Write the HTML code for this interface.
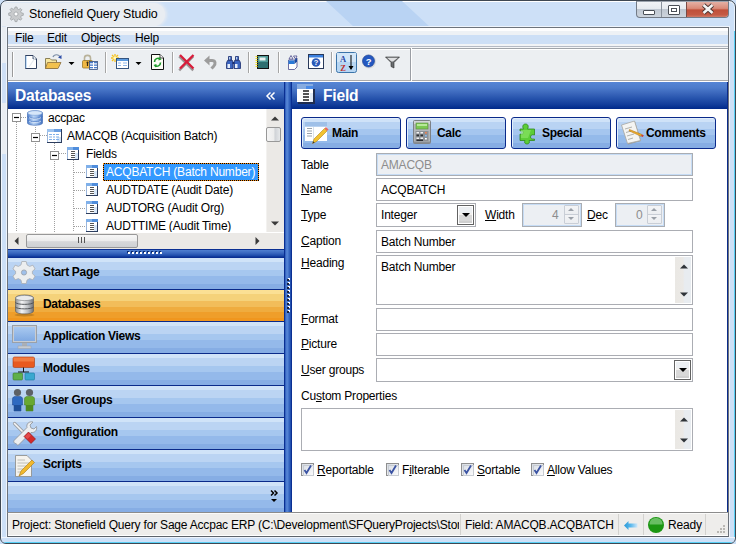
<!DOCTYPE html>
<html><head><meta charset="utf-8">
<style>
*{margin:0;padding:0;box-sizing:border-box}
html,body{width:736px;height:544px;overflow:hidden;background:#cde0f7}
body{font-family:"Liberation Sans",sans-serif;font-size:12px;letter-spacing:-0.2px;color:#000;position:relative}
.a{position:absolute}
.t{position:absolute;white-space:nowrap;line-height:1}
svg{position:absolute;overflow:visible}
#frame{left:0;top:0;width:736px;height:544px;border:1px solid #3e4752;border-radius:7px 7px 6px 6px;background:#cde0f7;overflow:hidden;box-shadow:inset 1px 0 0 #f2f7fd,inset -1px 0 0 #eaf3fc,inset 0 1px 0 #fff}
.hdr{height:27px;background:linear-gradient(#5585d5 0%,#4c7bcb 22%,#3a66bb 42%,#2754ad 60%,#143f9c 82%,#00298a 100%)}
.nav{left:8px;width:276px;height:32px;background:linear-gradient(#d0e3f8 0,#d0e3f8 4px,#bbd4f3 4px,#bbd4f3 12px,#a6c7ef 12px,#a6c7ef 18px,#94b9ea 18px,#94b9ea 26px,#86ade4 26px,#86ade4 31px,#0a2a8a 31px)}
.nav.sel{background:linear-gradient(#fbe094 0,#fbe094 4px,#f5d27a 4px,#f5d27a 11px,#f2bd5a 11px,#f2bd5a 17px,#efac3f 17px,#efac3f 22px,#ef9e2a 22px,#ef9e2a 28px,#f0961e 28px,#f0961e 31px,#0a2a8a 31px)}
.nav .t{left:35px;top:7.6px;font-weight:bold;font-size:12px;letter-spacing:-0.3px}
.nav svg{left:6px;top:4px}
.sep{top:52px;width:2px;height:21px;border-left:1px solid #a5a5a5;border-right:1px solid #fff}
.lbl{position:absolute;white-space:nowrap;line-height:1;left:301px}
.box{position:absolute;border:1px solid #abadb3;background:#fff}
.dis{background:#eceff3;border-color:#a9adb3;box-shadow:inset 0 0 0 1px #c6dcf5}
.u{border-bottom:1px solid #000;display:inline-block;line-height:10px}
.tb{position:absolute;left:376px;width:317px}
.tr{position:absolute;white-space:nowrap;line-height:1}
.dd{position:absolute;width:17px;height:20px;border:1px solid #626262;box-shadow:inset 0 0 0 1px #fff;background:linear-gradient(#eceff2 0,#eceff2 7px,#f2f0ee 7px,#f2f0ee 9px,#d8d8d8 9px,#d8d8d8 15px,#cfcfcf 15px)}
.dd:after{content:"";position:absolute;left:4px;top:7px;border-left:4px solid transparent;border-right:4px solid transparent;border-top:4px solid #000}
.btn{position:absolute;top:117px;width:100px;height:32px;border:1px solid #0a2a8a;border-radius:3px;box-shadow:inset 1px 1px 0 #e2eefb;background:linear-gradient(#cfe2f8 0,#cfe2f8 4px,#b9d3f3 4px,#b9d3f3 10.5px,#a5c6ef 10.5px,#a5c6ef 16.5px,#94baea 16.5px,#94baea 25px,#86ade4 25px)}
.btn .t{top:9.1px;font-weight:bold;font-size:12px;letter-spacing:-0.3px}
.cb{position:absolute;top:463px;width:13px;height:13px;border:1px solid #8f8f8f;background:linear-gradient(135deg,#d6dbe2,#fbfbfc)}
.cb:before{content:"";position:absolute;left:1px;top:1px;width:9px;height:9px;border:1px solid #c6cbd2}
.sb{position:absolute;background:#ebe9e6}
.spin{width:15px;height:19px;border:1px solid #c9ced6;border-radius:1px;background:linear-gradient(#f3f4f6 0,#eceef1 8px,#c9ced6 8px,#c9ced6 9px,#f3f4f6 9px,#eceef1 100%)}
.spin:before{content:"";position:absolute;left:3px;top:2px;border-left:3.5px solid transparent;border-right:3.5px solid transparent;border-bottom:3.5px solid #9aa0a8}
.spin:after{content:"";position:absolute;left:3px;top:11px;border-left:3.5px solid transparent;border-right:3.5px solid transparent;border-top:3.5px solid #9aa0a8}
</style></head><body>
<div id="frame" class="a">
  <svg width="736" height="26" style="left:0;top:0"><polygon points="325,0 401,0 429,26 353,26" fill="#b9d3f3"/></svg>
  <div class="a" style="left:1px;top:2px;width:163px;height:23px;border-radius:0 12px 12px 0;background:#e9edf2;box-shadow:1px 0 3px 1px #e4eaf2"></div>
  <div class="a" style="left:1px;top:26px;width:6px;height:127px;background:#e9edf2"></div>
  <div class="a" style="left:5px;top:26px;width:1px;height:510px;background:#eef4fc"></div>
  <div class="a" style="left:728px;top:26px;width:1px;height:510px;background:#eef4fc"></div>
  <div class="a" style="left:733px;top:30px;width:1px;height:506px;background:#58d0f6"></div>
  <div class="a" style="left:1px;top:536px;width:732px;height:6px;background:linear-gradient(#eef4fc 0,#eef4fc 1px,#cde0f7 1px,#cde0f7 5px,#58d0f6 5px)"></div>
  <div class="a" style="left:1px;top:62px;width:4px;height:40px;background:#cfe0f6"></div>
</div>
<!-- title -->
<svg width="16" height="16" style="left:8px;top:6px" viewBox="0 0 16 16"><g fill="#c9cbcd" stroke="#9a9da1" stroke-width="0.7"><path d="M7 1h2l.4 2 1.4.6 1.7-1.2 1.4 1.4-1.2 1.7.6 1.4 2 .4v2l-2 .4-.6 1.4 1.2 1.7-1.4 1.4-1.7-1.2-1.4.6-.4 2H7l-.4-2-1.4-.6-1.7 1.2-1.4-1.4 1.2-1.7-.6-1.4-2-.4V7l2-.4.6-1.4-1.2-1.7 1.4-1.4 1.7 1.2 1.4-.6z"/></g><circle cx="8" cy="8" r="2" fill="#fff" stroke="#9a9da1" stroke-width=".7"/></svg>
<div class="t" style="left:29px;top:8px;font-size:12.4px;letter-spacing:-0.1px">Stonefield Query Studio</div>
<!-- caption buttons -->
<div class="a" style="left:636px;top:1px;width:93px;height:17px;border:1px solid #737b86;border-top-color:#9aa2ac;border-radius:0 0 4px 4px;overflow:hidden;background:linear-gradient(#f1f3f6 0,#e6eaef 45%,#bfc7d1 50%,#cdd4dc 100%)">
  <div class="a" style="left:24px;top:0;width:1px;height:17px;background:#8a929c"></div>
  <div class="a" style="left:49px;top:0;width:42px;height:16px;border-left:1px solid #7a4a44;background:linear-gradient(#e4b0a4 0,#d98a78 40%,#c0503a 50%,#c45a44 80%,#d88a78 100%)"></div>
  <div class="a" style="left:6px;top:8px;width:12px;height:5px;border:1px solid #4a4f56;background:#fff;border-radius:1px"></div>
  <div class="a" style="left:31px;top:3px;width:12px;height:10px;border:1px solid #4a4f56;background:#fff;border-radius:1px"><div class="a" style="left:2px;top:2px;width:6px;height:4px;border:1px solid #4a4f56"></div></div>
  <svg width="12" height="10" style="left:65px;top:2px" viewBox="0 0 12 10"><path d="M1.5 1L10.5 9M10.5 1L1.5 9" stroke="#4a3430" stroke-width="4.4"/><path d="M1.5 1L10.5 9M10.5 1L1.5 9" stroke="#f4f4f4" stroke-width="2.6"/></svg>
</div>
<!-- menu -->
<div class="a" style="left:6px;top:26px;width:724px;height:1px;background:#eef4fc"></div>
<div class="a" style="left:7px;top:27px;width:722px;height:21px;border:1px solid #6d737b;border-bottom:none;background:linear-gradient(#fdfdfe 0,#fdfdfe 3px,#eef1f5 3px,#eef1f5 7px,#cddff6 7px,#cddff6 16px,#f1f3f6 16px,#f1f3f6 18px,#b5bac4 18px,#b5bac4 19px,#f4f5f7 19px)"></div>
<div class="t" style="left:15px;top:32px">File</div>
<div class="t" style="left:47px;top:32px">Edit</div>
<div class="t" style="left:81px;top:32px">Objects</div>
<div class="t" style="left:135px;top:32px">Help</div>

<!-- toolbar -->
<div class="a" style="left:7px;top:48px;width:722px;height:34px;border-left:1px solid #6d737b;border-right:1px solid #6d737b;background:#eceff2"></div>
<div class="a" style="left:8px;top:48px;width:403px;height:33px;border-top:1px solid #a0a4aa;border-right:1px solid #9a9ea4;border-bottom:1px solid #a9a9a9;background:#eceff2;box-shadow:1px 0 0 #fff,inset 0 1px 0 #fff"></div>
<div class="a" style="left:412px;top:48px;width:316px;height:2px;background:linear-gradient(#a0a4aa 0,#a0a4aa 1px,#fff 1px)"></div>
<div class="a" style="left:412px;top:80px;width:316px;height:1px;background:#a9a9a9"></div>
<div class="a" style="left:8px;top:81px;width:720px;height:1px;background:#fff"></div>
<div class="a" style="left:12px;top:52px;width:2px;height:25px;border-left:1px solid #9a9a9a;border-right:1px solid #fff"></div>
<div class="a sep" style="left:105px"></div>
<div class="a sep" style="left:172px"></div>
<div class="a sep" style="left:248px"></div>
<div class="a sep" style="left:278px"></div>
<div class="a sep" style="left:331px"></div>
<svg width="420" height="34" style="left:0;top:48px" viewBox="0 48 420 34">
 <!-- new doc -->
 <path d="M25.5 55.5H33L36.5 59V68.5H25.5Z" fill="#fff" stroke="#2f3f5e"/>
 <path d="M26 56V68" stroke="#8fc0f0"/>
 <path d="M33 55.5V59H36.5" fill="#dfe8f2" stroke="#2f3f5e" stroke-width=".8"/>
 <path d="M29 67L35 58" stroke="#e6ebf0" stroke-width="1.2"/>
 <!-- open folder -->
 <path d="M45.5 58.5H50L51.5 60H56.5V68.5H45.5Z" fill="#f7e7a0" stroke="#8b8058"/>
 <path d="M47.5 62.5H61L58 68.5H45.5Z" fill="#f2c14e" stroke="#8b7040" stroke-width=".8"/>
 <path d="M53 57C54 54 59 54 60 57" fill="none" stroke="#7a8ca6" stroke-width="1.2"/>
 <path d="M58 57.5L61.5 55V59Z" fill="#3050a8"/>
 <path d="M68.5 62H74.5L71.5 65Z" fill="#000"/>
 <!-- lock -->
 <path d="M84.5 61V58C84.5 54.5 90.5 54.5 90.5 58V61" fill="none" stroke="#b9b29a" stroke-width="1.6"/>
 <rect x="82.5" y="60.5" width="10" height="7.5" rx="1" fill="#f0b844" stroke="#9a7a2a" stroke-width=".8"/>
 <path d="M87.5 62V66" stroke="#3a2a10" stroke-width="1.2"/><circle cx="87.5" cy="62.5" r="1" fill="#3a2a10"/>
 <rect x="89.5" y="61.5" width="8" height="8" fill="#fff" stroke="#2f4a7a" stroke-width=".8"/>
 <g fill="#4a7cc8"><rect x="90" y="62" width="3" height="1.3"/><rect x="94" y="62" width="3" height="1.3"/><rect x="90" y="64.5" width="3" height="1.3"/><rect x="94" y="64.5" width="3" height="1.3"/><rect x="90" y="67" width="3" height="1.3"/><rect x="94" y="67" width="3" height="1.3"/></g>
 <!-- new table -->
 <g stroke="#f6c21c" stroke-width="1.3"><path d="M115 54V62M111 58H119M112 55L118 61M118 55L112 61"/></g>
 <circle cx="115" cy="58" r="1.8" fill="#fff8c0"/>
 <rect x="116.5" y="58.5" width="12" height="10" fill="#fff" stroke="#34547f"/>
 <rect x="117" y="59" width="11" height="2" fill="#5b9ae0"/>
 <g fill="#8fb8ec"><rect x="118" y="62.5" width="3" height="1"/><rect x="123" y="62.5" width="4" height="1"/><rect x="118" y="65" width="3" height="1"/><rect x="123" y="65" width="4" height="1"/></g>
 <path d="M135.5 62H141.5L138.5 65Z" fill="#000"/>
 <!-- refresh doc -->
 <path d="M151.5 54.5H160L163.5 58V69.5H151.5Z" fill="#fdfdf4" stroke="#111"/>
 <path d="M160 54.5V58H163.5" fill="#fff" stroke="#111" stroke-width=".8"/>
 <path d="M154.5 62C154.5 58.5 158 57.5 160 59" fill="none" stroke="#1d9a2a" stroke-width="1.6"/><path d="M159 57L161.5 59.5L158.5 60.5Z" fill="#1d9a2a"/>
 <path d="M160.5 62.5C160.5 66 157 67 155 65.5" fill="none" stroke="#1d9a2a" stroke-width="1.6"/><path d="M156 67.5L153.5 65L156.5 64Z" fill="#1d9a2a"/>
 <!-- red X -->
 <path d="M180 55.5L194 69.5M194 55.5L180 69.5" stroke="#4a3a3a" stroke-width="2.4" opacity=".5" transform="translate(-.8,.8)"/>
 <path d="M180 55L193.5 68.5M193.5 55L180 68.5" stroke="#d81c3a" stroke-width="2.3"/>
 <!-- undo gray -->
 <path d="M204 60.5L209.5 55.5V65.5Z" fill="#9c9c9c"/>
 <path d="M208 60.5H212C215.5 60.5 216 64 213.5 66.5L211.5 68.5" fill="none" stroke="#9c9c9c" stroke-width="3"/>
 <!-- binoculars -->
 <g stroke="#1c2f70" stroke-width=".8" fill="#3a64c0">
  <path d="M228.5 56.5H231.5V60H228.5Z"/><path d="M235.5 56.5H238.5V60H235.5Z"/>
  <path d="M227.5 60.5H232.5L233 63V68.5H226.5V63Z"/>
  <path d="M234.5 60.5H239.5L240.5 63V68.5H234V63Z"/>
 </g>
 <rect x="232.5" y="62" width="2" height="2" fill="#1c2f70"/>
 <rect x="227.5" y="64" width="2.5" height="4" fill="#e6eefa"/><rect x="235" y="64" width="2.5" height="4" fill="#e6eefa"/>
 <rect x="229" y="57" width="1.2" height="2.5" fill="#b9cff0"/><rect x="236" y="57" width="1.2" height="2.5" fill="#b9cff0"/>
 <!-- book -->
 <rect x="257.5" y="55.5" width="11" height="13" fill="#2e6f70" stroke="#111"/>
 <rect x="258" y="56" width="10" height="6" fill="#4f9a98"/>
 <rect x="259.5" y="57.5" width="6" height="3" fill="#e9f0f0"/>
 <g fill="#f0e020"><rect x="255.5" y="56" width="2" height="1"/><rect x="255.5" y="58" width="2" height="1"/><rect x="255.5" y="60" width="2" height="1"/><rect x="255.5" y="62" width="2" height="1"/><rect x="255.5" y="64" width="2" height="1"/><rect x="255.5" y="66" width="2" height="1"/></g>
 <!-- 3d shapes -->
 <path d="M289 59L291 55.5L293 59Z" fill="#fff" stroke="#4a4a8a" stroke-width=".8"/>
 <path d="M293.5 56H297L295.5 59Z" fill="#fff" stroke="#4a4a8a" stroke-width=".8"/>
 <path d="M288.5 60H294.5L297 58V67L294.5 69.5H288.5Z" fill="#fff" stroke="#4a4a8a" stroke-width=".8"/>
 <path d="M288.5 60.5H294.5V64H288.5Z" fill="#2a7ad8"/><path d="M294.5 60L297 58V61.5L294.5 64Z" fill="#1a4aa0"/>
 <!-- window ? -->
 <rect x="308.5" y="54.5" width="15" height="14" fill="#fff" stroke="#2a3a5a"/>
 <rect x="309" y="55" width="14" height="2.5" fill="#3a80e0"/>
 <circle cx="316" cy="62.5" r="4.3" fill="#2a5ab8"/>
 <text x="316" y="65.3" font-family="Liberation Sans" font-weight="bold" font-size="7.5" fill="#fff" text-anchor="middle">?</text>
 <!-- AZ pressed -->
 <rect x="336.5" y="52.5" width="20" height="20" rx="2" fill="#b7d6f3" stroke="#3b74aa"/>
 <rect x="337" y="53" width="19" height="9" fill="#d2e6f8"/>
 <text x="343" y="62" font-family="Liberation Serif" font-weight="bold" font-size="8.5" fill="#2a4aa8" text-anchor="middle">A</text>
 <text x="343" y="70.5" font-family="Liberation Serif" font-weight="bold" font-size="8.5" fill="#c03030" text-anchor="middle">Z</text>
 <path d="M351 55V69" stroke="#000" stroke-width="1"/><path d="M348.5 66L351 70L353.5 66Z" fill="#000"/>
 <!-- help circle -->
 <circle cx="369" cy="61.5" r="7" fill="#d7d9dc"/>
 <circle cx="368.5" cy="61" r="6" fill="#2458c0" stroke="#183e90" stroke-width=".6"/>
 <text x="368.5" y="64.5" font-family="Liberation Sans" font-weight="bold" font-size="9.5" fill="#fff" text-anchor="middle">?</text>
 <!-- filter -->
 <path d="M385.5 57H399.5L394 62.5V68L391 66.5V62.5Z" fill="#6a6d70" stroke="#2a2a2a" stroke-width=".6"/>
 <path d="M387 57.8H398L393 61.5H391.5Z" fill="#dfe0e2"/>
</svg>


<!-- body -->
<div class="a" style="left:7px;top:82px;width:722px;height:431px;border-left:1px solid #6d737b;border-right:1px solid #6d737b;background:#fff"></div>
<!-- left header -->
<div class="a hdr" style="left:8px;top:82px;width:276px"></div>
<div class="t" style="left:15px;top:88px;font-size:15.6px;font-weight:bold;color:#fff">Databases</div>
<svg width="12" height="10" style="left:265px;top:91px" viewBox="0 0 12 10"><path d="M5.5 1.5L2 5L5.5 8.5M9.5 1.5L6 5L9.5 8.5" fill="none" stroke="#fff" stroke-width="1.5"/></svg>
<!-- tree -->
<svg width="258" height="123" style="left:8px;top:109px">
 <g stroke="#a0a0a0" stroke-width="1" stroke-dasharray="1 1">
  <line x1="8.5" y1="13" x2="8.5" y2="123"/>
  <line x1="27.5" y1="18" x2="27.5" y2="123"/>
  <line x1="46.5" y1="34" x2="46.5" y2="123"/>
  <line x1="65.5" y1="51" x2="65.5" y2="123"/>
  <line x1="13" y1="8.5" x2="19" y2="8.5"/>
  <line x1="32" y1="26.5" x2="39" y2="26.5"/>
  <line x1="51" y1="44.5" x2="59" y2="44.5"/>
  <line x1="66" y1="63.5" x2="78" y2="63.5"/>
  <line x1="66" y1="81.5" x2="78" y2="81.5"/>
  <line x1="66" y1="99.5" x2="78" y2="99.5"/>
  <line x1="66" y1="117.5" x2="78" y2="117.5"/>
 </g>
 <g fill="#fff" stroke="#919191">
  <rect x="4.5" y="4.5" width="8" height="8"/>
  <rect x="23.5" y="24.5" width="8" height="8"/>
  <rect x="42.5" y="42.5" width="8" height="8"/>
 </g>
 <g stroke="#000" stroke-width="1.2"><line x1="6" y1="8.5" x2="11" y2="8.5"/><line x1="25" y1="28.5" x2="30" y2="28.5"/><line x1="44" y1="46.5" x2="49" y2="46.5"/></g>
 <!-- db icon -->
 <defs><linearGradient id="dbg" x1="0" x2="1"><stop offset="0" stop-color="#4f7fcc"/><stop offset=".4" stop-color="#b9d3f3"/><stop offset=".6" stop-color="#9cbdea"/><stop offset="1" stop-color="#3f6fc0"/></linearGradient></defs>
 <g transform="translate(19,1)">
  <path d="M0.5 3C0.5 0 15.5 0 15.5 3V13C15.5 16 0.5 16 0.5 13Z" fill="url(#dbg)" stroke="#4a74b8" stroke-width=".7"/>
  <ellipse cx="8" cy="3" rx="7.3" ry="2.3" fill="#d6e6f9" stroke="#6a94d0" stroke-width=".5"/>
  <path d="M0.5 6.5C2.5 9 13.5 9 15.5 6.5M0.5 10C2.5 12.5 13.5 12.5 15.5 10" fill="none" stroke="#3f6fc0" stroke-width=".9"/>
  <path d="M2 7.5C4 9.5 12 9.5 14 7.5M2 11C4 13 12 13 14 11" fill="none" stroke="#e4effb" stroke-width=".8"/>
 </g>
 <!-- table icon -->
 <g transform="translate(39,20)">
  <rect x="0" y="0" width="15" height="14" fill="#2c3d5e"/>
  <rect x="0" y="0" width="14" height="13" fill="#fff"/>
  <rect x="0" y="0" width="1" height="13" fill="#9ab6dc"/>
  <rect x="0" y="0" width="14" height="3" fill="#6a9ee0"/>
  <rect x="0" y="0" width="7" height="3" fill="#9ec4f0"/>
  <rect x="10" y="8" width="4" height="5" fill="#d6e6f8"/>
  <g fill="#7fb0ea"><rect x="2" y="5" width="3" height="1"/><rect x="6" y="5" width="2" height="1"/><rect x="9" y="5" width="3" height="1"/><rect x="2" y="7.5" width="3" height="1"/><rect x="6" y="7.5" width="2" height="1"/><rect x="9" y="7.5" width="3" height="1"/><rect x="2" y="10" width="3" height="1"/><rect x="6" y="10" width="2" height="1"/><rect x="9" y="10" width="3" height="1"/></g>
 </g>
 <!-- field icons -->
 <g id="fi">
  <g transform="translate(59,38)"><rect x="0" y="0" width="12" height="13" fill="#2c3d5e"/><rect x="0" y="0" width="11" height="12" fill="#fff"/><rect x="0" y="0" width="1" height="12" fill="#9ab6dc"/><rect x="0" y="0" width="12" height="3" fill="#4f8ddc"/><rect x="0" y="0" width="6" height="3" fill="#7fb0ea"/><rect x="8" y="6" width="3" height="6" fill="#d6e6f8"/><g fill="#555"><rect x="4" y="4" width="4" height="1"/><rect x="4" y="6" width="4" height="1"/><rect x="4" y="8" width="4" height="1"/><rect x="4" y="10" width="4" height="1"/></g></g>
 </g>
 <use href="#fi" x="19" y="18"/>
 <use href="#fi" x="19" y="36"/>
 <use href="#fi" x="19" y="54"/>
 <use href="#fi" x="19" y="72"/>
</svg>
<div class="t" style="left:48px;top:112px">accpac</div>
<div class="t" style="left:67px;top:130px">AMACQB (Acquisition Batch)</div>
<div class="t" style="left:86px;top:148px">Fields</div>
<svg width="156" height="18" style="left:103px;top:163px" shape-rendering="crispEdges"><rect x="0" y="0" width="156" height="18" fill="#3399ff"/><rect x=".5" y=".5" width="155" height="17" fill="none" stroke="#f88c14"/><rect x=".5" y=".5" width="155" height="17" fill="none" stroke="#000" stroke-dasharray="1 1"/></svg>
<div class="t" style="left:106px;top:166px;color:#fff">ACQBATCH (Batch Number)</div>
<div class="t" style="left:106px;top:184px">AUDTDATE (Audit Date)</div>
<div class="t" style="left:106px;top:202px">AUDTORG (Audit Org)</div>
<div class="a" style="left:8px;top:217px;width:258px;height:15px;overflow:hidden"><div class="t" style="left:98px;top:3px">AUDTTIME (Audit Time)</div></div>
<!-- vertical scrollbar -->
<div class="sb" style="left:266px;top:109px;width:18px;height:124px;border-left:1px solid #f3f2f0"></div>
<svg width="8" height="5" style="left:271px;top:116px"><path d="M0 4.5L4 0.5L8 4.5Z" fill="#3a3a3a"/></svg>
<svg width="8" height="5" style="left:271px;top:221px"><path d="M0 .5L4 4.5L8 .5Z" fill="#3a3a3a"/></svg>
<div class="a" style="left:266px;top:127px;width:15px;height:15px;border:1px solid #989898;border-radius:2px;background:linear-gradient(90deg,#f5f5f5 0,#ececec 55%,#cfd2d6 60%,#e6e8ea 100%)"></div>
<!-- horizontal scrollbar -->
<div class="sb" style="left:8px;top:232px;width:276px;height:17px;border-top:1px solid #fff"></div>
<svg width="5" height="8" style="left:14px;top:237px"><path d="M4.5 0L.5 4L4.5 8Z" fill="#3a3a3a"/></svg>
<svg width="5" height="8" style="left:255px;top:237px"><path d="M.5 0L4.5 4L.5 8Z" fill="#3a3a3a"/></svg>
<div class="a" style="left:26px;top:234px;width:112px;height:14px;border:1px solid #989898;border-radius:2px;background:linear-gradient(#f7f7f7 0,#ececec 50%,#d7d8da 55%,#cfd1d4 100%)"></div>
<svg width="10" height="6" style="left:77px;top:237px"><g stroke="#555"><line x1="1.5" y1="0" x2="1.5" y2="6"/><line x1="4.5" y1="0" x2="4.5" y2="6"/><line x1="7.5" y1="0" x2="7.5" y2="6"/></g></svg>
<!-- nav splitter bar -->
<div class="a" style="left:8px;top:249px;width:276px;height:9px;background:linear-gradient(#0a2f92 0,#0a2f92 1px,#5080d0 1px,#3a68c0 4px,#1a48a8 7px,#0a2f92 8px)"></div>
<svg width="40" height="4" style="left:127px;top:251px"><g id="gd"><rect x="0" y="0" width="2" height="2" fill="#0a2a70"/><rect x="1" y="1" width="2" height="2" fill="#fff"/></g><use href="#gd" x="4"/><use href="#gd" x="8"/><use href="#gd" x="12"/><use href="#gd" x="16"/><use href="#gd" x="20"/><use href="#gd" x="24"/><use href="#gd" x="28"/><use href="#gd" x="32"/></svg>
<!-- nav -->
<div class="a nav" style="top:258px"><div class="t">Start Page</div></div>
<div class="a nav sel" style="top:290px"><div class="t">Databases</div></div>
<div class="a nav" style="top:322px"><div class="t">Application Views</div></div>
<div class="a nav" style="top:354px"><div class="t">Modules</div></div>
<div class="a nav" style="top:386px"><div class="t">User Groups</div></div>
<div class="a nav" style="top:418px"><div class="t">Configuration</div></div>
<div class="a nav" style="top:450px"><div class="t">Scripts</div></div>
<div class="a nav" style="top:482px;height:30px;background:linear-gradient(#d0e3f8 0,#d0e3f8 4px,#bbd4f3 4px,#bbd4f3 12px,#a6c7ef 12px,#a6c7ef 18px,#94b9ea 18px,#94b9ea 26px,#86ade4 26px)"></div>
<svg width="9" height="13" style="left:270px;top:490px"><path d="M1 .5L3.5 3L1 5.5M4.5 .5L7 3L4.5 5.5" fill="none" stroke="#000" stroke-width="1.5"/><path d="M1 9H7L4 12Z" fill="#000"/></svg>
<svg width="40" height="230" style="left:8px;top:256px" viewBox="8 256 40 230">
 <defs>
  <linearGradient id="silv" x1="0" x2="1"><stop offset="0" stop-color="#8a8d90"/><stop offset=".35" stop-color="#f4f5f6"/><stop offset=".7" stop-color="#b9bcc0"/><stop offset="1" stop-color="#6e7175"/></linearGradient>
  <linearGradient id="scr" x1="0" y1="0" x2="0" y2="1"><stop offset="0" stop-color="#a9c9f0"/><stop offset="1" stop-color="#7fa9e2"/></linearGradient>
 </defs>
 <!-- gear -->
 <g transform="translate(24,272.5)">
  <path d="M-2.2-11H2.2L3-7.6 5.6-6.1 8.9-7.3 11.1-3.5 8.4-1.3V1.3L11.1 3.5 8.9 7.3 5.6 6.1 3 7.6 2.2 11H-2.2L-3 7.6-5.6 6.1-8.9 7.3-11.1 3.5-8.4 1.3V-1.3L-11.1-3.5-8.9-7.3-5.6-6.1-3-7.6Z" fill="#eceeef" stroke="#a9adb2" stroke-width=".8"/>
  <circle r="2.6" fill="#9fc0ea" stroke="#9aa0a6" stroke-width=".8"/>
 </g>
 <!-- db silver -->
 <g>
  <path d="M15.5 298C15.5 294 33.5 294 33.5 298V311C33.5 315 15.5 315 15.5 311Z" fill="url(#silv)" stroke="#55585c" stroke-width=".6"/>
  <ellipse cx="24.5" cy="298" rx="9" ry="2.6" fill="#e9eaeb" stroke="#7a7d80" stroke-width=".6"/>
  <path d="M15.5 302.5C17 305 32 305 33.5 302.5M15.5 307C17 309.5 32 309.5 33.5 307" fill="none" stroke="#4a4d50" stroke-width=".9"/>
  <ellipse cx="24.5" cy="315" rx="10" ry="1.5" fill="#7a5010" opacity=".35"/>
 </g>
 <!-- monitor -->
 <rect x="12.5" y="325.5" width="24" height="17" fill="#c9cdd2" stroke="#9aa0a8"/>
 <rect x="14" y="327" width="21" height="14" fill="url(#scr)"/>
 <rect x="22" y="343" width="5" height="3" fill="#aab0b8"/>
 <rect x="18" y="346" width="13" height="2.5" fill="#c6cbd1" stroke="#9aa0a8" stroke-width=".5"/>
 <!-- modules -->
 <rect x="13" y="357" width="21.5" height="10.5" rx="1.5" fill="#e85a20" stroke="#a83a10" stroke-width=".6"/>
 <rect x="13.5" y="357.5" width="20.5" height="4" fill="#f58a50" opacity=".7"/>
 <path d="M23.5 367.5V372M18 372H29" stroke="#111" stroke-width="1"/>
 <rect x="13" y="373" width="9.5" height="7" rx="1" fill="#5fb04a" stroke="#3a7a2a" stroke-width=".6"/>
 <rect x="25" y="373" width="9.5" height="7" rx="1" fill="#3aa8d0" stroke="#1a78a0" stroke-width=".6"/>
 <!-- users -->
 <circle cx="17.5" cy="392.5" r="3.6" fill="#5d6166"/>
 <path d="M12.5 399C12.5 397 14 396.5 15.5 396.5H19.5C21 396.5 22.5 397 22.5 399V405H21V411H14V405H12.5Z" fill="#2f6ac0" stroke="#1a4088" stroke-width=".5"/>
 <rect x="14" y="405" width="7" height="6" fill="#1f4f98"/>
 <circle cx="29.5" cy="392.5" r="3.6" fill="#5d6166"/>
 <path d="M24.5 399C24.5 397 26 396.5 27.5 396.5H31.5C33 396.5 34.5 397 34.5 399V405H33V411H26V405H24.5Z" fill="#68a832" stroke="#3f7a18" stroke-width=".5"/>
 <rect x="26" y="405" width="7" height="6" fill="#4f8a20"/>
 <!-- configuration -->
 <path d="M14.5 423.5L27 436" stroke="#9ca0a5" stroke-width="3.2" stroke-linecap="round"/>
 <path d="M14.5 423.5L27 436" stroke="#f4f5f6" stroke-width="1.6" stroke-linecap="round"/>
 <path d="M16 443.5C14 443.5 13 441.5 14.5 440L27 427.5C26 424 29 421 33 422L30 425L31 428L34 429L36.5 426.5C37.5 430.5 34.5 433 31 432.5L18.5 445C17.5 445.5 16.5 444.5 16 443.5Z" fill="#eceef0" stroke="#8d9196" stroke-width=".8"/>
 <path d="M24 436.5L28.5 432L35.5 439L31 443.5Z" fill="#d42a2a" stroke="#8a1010" stroke-width=".6"/>
 <path d="M25 436.5L28.5 433L31 435.5L27.5 439Z" fill="#ee6060" opacity=".6"/>
 <!-- scripts -->
 <path d="M15.5 455.5H27L31.5 460V476.5H15.5Z" fill="#f5f3ee" stroke="#8a8a86" stroke-width=".8"/>
 <g stroke="#b0b0aa" stroke-width=".8"><path d="M17.5 460H25M17.5 463H29M17.5 466H29M17.5 469H25M17.5 472H23"/></g>
 <path d="M19 476L21 471L32 460L34.5 462.5L23.5 473.5Z" fill="#f1b82c" stroke="#a87818" stroke-width=".6"/>
</svg>
<!-- vertical splitter -->
<div class="a" style="left:284px;top:82px;width:8px;height:430px;background:linear-gradient(90deg,#0a2f92 0,#0a2f92 1px,#2a58b8 1px,#5a8ad8 3px,#3a6ac4 5px,#1a48a8 7px,#0a2f92 7px)"></div>

<svg width="4" height="36" style="left:287px;top:278px"><g id="gv"><rect x="1" y="0" width="2" height="2" fill="#fff"/><rect x="0" y="1" width="2" height="2" fill="#1a1f3a"/></g><use href="#gv" y="4"/><use href="#gv" y="8"/><use href="#gv" y="12"/><use href="#gv" y="16"/><use href="#gv" y="20"/><use href="#gv" y="24"/><use href="#gv" y="28"/><use href="#gv" y="32"/></svg>
<!-- right header -->
<div class="a" style="left:727px;top:82px;width:1px;height:430px;background:#0a2a8a"></div>
<div class="a hdr" style="left:292px;top:82px;width:435px"></div>
<svg width="20" height="22" style="left:296px;top:83px" viewBox="296 83 20 22">
 <rect x="313" y="89" width="2" height="15" fill="#1f2d4f"/>
 <rect x="298" y="102" width="17" height="2" fill="#1f2d4f"/>
 <rect x="297" y="84" width="16" height="5" fill="#8db0e2" opacity=".9"/>
 <rect x="306" y="86" width="7" height="3" fill="#4a8ae6"/>
 <rect x="297" y="89" width="16" height="13" fill="#fff"/>
 <rect x="310" y="93" width="3" height="9" fill="#e2ecf8"/>
 <g fill="#555"><rect x="303" y="90" width="6" height="2"/><rect x="303" y="93" width="6" height="2"/><rect x="303" y="96" width="6" height="2"/><rect x="303" y="99" width="6" height="2"/></g>
</svg>
<div class="t" style="left:323px;top:88px;font-size:15.6px;font-weight:bold;color:#fff">Field</div>
<!-- buttons -->
<div class="btn" style="left:301px"><div class="t" style="left:30px">Main</div>
 <svg width="24" height="24" style="left:2px;top:3px" viewBox="304 121 24 24">
  <rect x="305" y="122" width="22" height="19" fill="#fff"/>
  <rect x="305" y="122" width="22" height="5" fill="#9fc0e8"/>
  <rect x="305" y="126" width="22" height="1" fill="#b9d2f0"/>
  <line x1="313.5" y1="127" x2="313.5" y2="141" stroke="#d9e2ec"/>
  <g fill="#9aa3ad"><rect x="307" y="128" width="5" height="1"/><rect x="307" y="130.5" width="5" height="1"/><rect x="307" y="133" width="5" height="1"/><rect x="307" y="135.5" width="5" height="1"/></g>
  <path d="M312.5 143.5L314 139L324.5 128.5L327 131L316.5 141.5Z" fill="#f2c230" stroke="#b3861a" stroke-width=".6"/>
  <path d="M324.5 128.5L326 127L328.5 129.5L327 131Z" fill="#e86a62"/>
  <path d="M312.5 143.5L313.2 141.3L314.7 142.8Z" fill="#333"/>
 </svg>
</div>
<div class="btn" style="left:406px"><div class="t" style="left:30px">Calc</div>
 <svg width="20" height="26" style="left:5px;top:1px" viewBox="411 119 20 26">
  <rect x="412.5" y="120.5" width="17" height="23" rx="1" fill="#b3b7bb" stroke="#7d8186"/>
  <rect x="413" y="121" width="16" height="3" fill="#d3d6d9"/>
  <rect x="415" y="123" width="12" height="6" fill="#7cc853" stroke="#5a8a40" stroke-width=".6"/>
  <rect x="416" y="124" width="10" height="2" fill="#b8e89a"/>
  <rect x="414.5" y="131" width="13" height="10" fill="#8d9196"/>
  <g fill="#f2f2f2"><rect x="415.5" y="132" width="2.5" height="1.5"/><rect x="419.5" y="132" width="2.5" height="1.5"/><rect x="415.5" y="137.5" width="2.5" height="1.5"/><rect x="419.5" y="137.5" width="2.5" height="1.5"/></g>
  <g fill="#2c2f33"><rect x="415.5" y="134.5" width="2.5" height="1.8"/><rect x="419.5" y="134.5" width="2.5" height="1.8"/><rect x="415.5" y="139.5" width="6.5" height="1.5"/></g>
  <rect x="424" y="132" width="1.8" height="1.5" fill="#f08050"/><rect x="424" y="135" width="1.8" height="1.5" fill="#80b8f0"/><rect x="424" y="138" width="1.8" height="1.5" fill="#fff"/>
  <rect x="413" y="141.5" width="16" height="2" fill="#8a8e92"/>
 </svg>
</div>
<div class="btn" style="left:511px"><div class="t" style="left:30px">Special</div>
 <svg width="20" height="26" style="left:6px;top:1px" viewBox="517 119 20 26">
  <path d="M519 129H522.5C521 126.5 522 124 524.5 124C527 124 528 126.5 526.5 129H533.5V135C531 134 529.5 135.5 529.5 137C529.5 138.5 531 139.5 533.5 139V140.5H528C529 142.5 528 144 526 144C524 144 523 142.5 524 140.5H519V134C521 135 522.5 134 522.5 132.5C522.5 131 521 130 519 131Z" fill="#5ccd38" stroke="#2f8a1a" stroke-width=".8"/>
  <path d="M520 130H530L527 138H520Z" fill="#8ee66a" opacity=".6"/>
 </svg>
</div>
<div class="btn" style="left:616px"><div class="t" style="left:29px">Comments</div>
 <svg width="26" height="26" style="left:3px;top:2px" viewBox="619 120 26 26">
  <path d="M621 126L634 121.5L640 141L627 144.5Z" fill="#9a9a96"/>
  <path d="M620.5 125L633.5 121L639.5 140.5L626.5 143.5Z" fill="#f4f4f2" stroke="#a7a7a2" stroke-width=".8"/>
  <g stroke="#a9a9a4" stroke-width=".9"><line x1="624" y1="129" x2="631" y2="127"/><line x1="625" y1="132.5" x2="630" y2="131"/><line x1="626" y1="136" x2="633" y2="134"/><line x1="627" y1="139.5" x2="632" y2="138"/></g>
  <path d="M628.5 129.5L641 134.5L640 136.3L628 130.8Z" fill="#f0b028" stroke="#a86810" stroke-width=".5"/>
  <path d="M641 134.5L642.8 135.2L641.8 137L640 136.3Z" fill="#d04030"/>
 </svg>
</div>
<!-- form labels -->
<div class="lbl" style="top:159px">Table</div>
<div class="lbl" style="top:182.5px"><u>N</u>ame</div>
<div class="lbl" style="top:209px"><u>T</u>ype</div>
<div class="lbl" style="top:235px"><u>C</u>aption</div>
<div class="lbl" style="top:257px"><u>H</u>eading</div>
<div class="lbl" style="top:312.5px"><u>F</u>ormat</div>
<div class="lbl" style="top:338px"><u>P</u>icture</div>
<div class="lbl" style="top:363.5px"><u>U</u>ser groups</div>
<div class="lbl" style="top:389.5px">Cu<u>s</u>tom Properties</div>
<!-- boxes -->
<div class="box dis" style="left:376px;top:153px;width:317px;height:23px"></div>
<div class="tr" style="left:381px;top:159px;color:#8d8d8d">AMACQB</div>
<div class="box" style="left:376px;top:178px;width:317px;height:23px"></div>
<div class="tr" style="left:381px;top:183.5px">ACQBATCH</div>
<div class="box" style="left:376px;top:203px;width:100px;height:24px"></div>
<div class="tr" style="left:381px;top:209px">Integer</div>
<div class="dd" style="left:457px;top:205px"></div>
<div class="lbl" style="left:485px;top:209px"><u>W</u>idth</div>
<div class="box dis" style="left:522px;top:203px;width:60px;height:24px"></div>
<div class="tr" style="left:552px;top:209px;color:#8d8d8d">4</div>
<div class="lbl" style="left:587px;top:209px"><u>D</u>ec</div>
<div class="box dis" style="left:615px;top:203px;width:50px;height:24px"></div>
<div class="tr" style="left:636px;top:209px;color:#8d8d8d">0</div>
<div class="box" style="left:376px;top:230px;width:317px;height:23px"></div>
<div class="tr" style="left:381px;top:236px">Batch Number</div>
<div class="box" style="left:376px;top:255px;width:317px;height:50px"></div>
<div class="tr" style="left:381px;top:261px">Batch Number</div>
<div class="box" style="left:376px;top:308px;width:317px;height:23px"></div>
<div class="box" style="left:376px;top:333px;width:317px;height:23px"></div>
<div class="box" style="left:376px;top:358px;width:317px;height:24px"></div>
<div class="dd" style="left:674px;top:360px"></div>
<div class="box" style="left:301px;top:408px;width:392px;height:43px"></div>
<!-- checkboxes -->
<div class="cb" style="left:301px"></div>
<div class="lbl" style="left:317px;top:464px"><u>R</u>eportable</div>
<div class="cb" style="left:386px"></div>
<div class="lbl" style="left:402px;top:464px">F<u>i</u>lterable</div>
<div class="cb" style="left:461px"></div>
<div class="lbl" style="left:477px;top:464px"><u>S</u>ortable</div>
<div class="cb" style="left:531px"></div>
<div class="lbl" style="left:547px;top:464px"><u>A</u>llow Values</div>

<!-- textarea scrollbars -->
<div class="a" style="left:675px;top:257px;width:16px;height:46px;background:linear-gradient(90deg,#eae8e4 0,#ebe9e6 50%,#e8ecf0 60%)"></div>
<svg width="8" height="5" style="left:680px;top:264px"><path d="M0 4.5L4 0.5L8 4.5Z" fill="#2e3338"/></svg>
<svg width="8" height="5" style="left:680px;top:292px"><path d="M0 .5L4 4.5L8 .5Z" fill="#2e3338"/></svg>
<div class="a" style="left:675px;top:410px;width:16px;height:39px;background:linear-gradient(90deg,#eae8e4 0,#ebe9e6 50%,#e8ecf0 60%)"></div>
<svg width="8" height="5" style="left:680px;top:417px"><path d="M0 4.5L4 0.5L8 4.5Z" fill="#2e3338"/></svg>
<svg width="8" height="5" style="left:680px;top:438px"><path d="M0 .5L4 4.5L8 .5Z" fill="#2e3338"/></svg>
<!-- spinners -->
<div class="a spin" style="left:564px;top:205px"></div>
<div class="a spin" style="left:647px;top:205px"></div>
<!-- check marks -->
<svg class="ck" width="13" height="13" style="left:301px;top:463px"><path d="M3.5 7L5.5 10L10 2.5" fill="none" stroke="#3b53a3" stroke-width="1.8"/></svg>
<svg class="ck" width="13" height="13" style="left:386px;top:463px"><path d="M3.5 7L5.5 10L10 2.5" fill="none" stroke="#3b53a3" stroke-width="1.8"/></svg>
<svg class="ck" width="13" height="13" style="left:461px;top:463px"><path d="M3.5 7L5.5 10L10 2.5" fill="none" stroke="#3b53a3" stroke-width="1.8"/></svg>
<svg class="ck" width="13" height="13" style="left:531px;top:463px"><path d="M3.5 7L5.5 10L10 2.5" fill="none" stroke="#3b53a3" stroke-width="1.8"/></svg>
<!-- status bar -->
<div class="a" style="left:7px;top:512px;width:722px;height:25px;border-left:1px solid #6d737b;border-right:1px solid #6d737b;border-bottom:1px solid #5d636b;border-top:1px solid #8c8c8c;background:#eeedeb;box-shadow:inset 0 1px 0 #fbfbfa,inset 0 -1px 0 #fff"></div>
<div class="a" style="left:8px;top:513px;width:451px;height:22px;overflow:hidden"><div class="t" style="left:4px;top:6px">Project: Stonefield Query for Sage Accpac ERP (C:\Development\SFQueryProjects\Stonefield)</div></div>
<div class="a" style="left:460px;top:514px;width:1px;height:21px;background:#d3d2cf"></div>
<div class="t" style="left:465px;top:519px">Field: AMACQB.ACQBATCH</div>
<div class="a" style="left:618px;top:514px;width:1px;height:21px;background:#d3d2cf"></div>
<svg width="14" height="9" style="left:624px;top:521px" viewBox="0 0 14 9"><defs><linearGradient id="ar" x1="0" x2="1"><stop offset="0" stop-color="#2a9ad8"/><stop offset=".5" stop-color="#5ab8ec"/><stop offset="1" stop-color="#d0e8fa"/></linearGradient></defs><path d="M0 4.5L4.5 0V2.5H13.5V6.5H4.5V9Z" fill="url(#ar)"/></svg>
<div class="a" style="left:643px;top:514px;width:1px;height:21px;background:#d3d2cf"></div>
<svg width="17" height="17" style="left:648px;top:517px" viewBox="0 0 17 17"><circle cx="8" cy="8" r="8" fill="#1c9612"/><path d="M1.5 7.5C1.5 3 4.5 1 8 1C11.5 1 14.5 3 14.5 7.5Z" fill="#7cc878" opacity=".8"/></svg>
<div class="t" style="left:668px;top:519px">Ready</div>
<div class="a" style="left:705px;top:514px;width:1px;height:21px;background:#d3d2cf"></div>
<svg width="10" height="10" style="left:716px;top:524px"><g fill="#b9b7b3"><rect x="7" y="1" width="2" height="2"/><rect x="4" y="4" width="2" height="2"/><rect x="7" y="4" width="2" height="2"/><rect x="1" y="7" width="2" height="2"/><rect x="4" y="7" width="2" height="2"/><rect x="7" y="7" width="2" height="2"/></g></svg>
</body></html>
